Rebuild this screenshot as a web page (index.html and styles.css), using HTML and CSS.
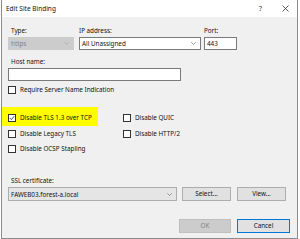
FILE: index.html
```html
<!DOCTYPE html>
<html lang="en">
<head>
    <meta charset="UTF-8">
    <title>Edit Site Binding</title>
    <link rel="stylesheet" href="styles.css">
</head>
<body>
    <div class="dialog">
        <div class="titlebar">
            <span class="title">Edit Site Binding</span>
            <span class="help">?</span>
            <svg class="close" width="7" height="7" viewBox="0 0 7 7">
                <path d="M0.5 0.5 L6.5 6.5 M6.5 0.5 L0.5 6.5" stroke="#333" stroke-width="0.8" fill="none"/>
            </svg>
        </div>

        <div class="content">
            <div class="fields">
                <div class="field f-type">
                    <label class="lbl indent">Type:</label>
                    <div class="select disabled">
                        <span>https</span>
                        <svg class="chev" width="5" height="3" viewBox="0 0 5 3"><path d="M0.3 0.3 L2.5 2.5 L4.7 0.3" stroke="#a8a8a8" stroke-width="0.7" fill="none"/></svg>
                    </div>
                </div>
                <div class="field f-ip">
                    <label class="lbl">IP address:</label>
                    <div class="select">
                        <span>All Unassigned</span>
                        <svg class="chev" width="5" height="3" viewBox="0 0 5 3"><path d="M0.3 0.3 L2.5 2.5 L4.7 0.3" stroke="#666" stroke-width="0.7" fill="none"/></svg>
                    </div>
                </div>
                <div class="field f-port">
                    <label class="lbl">Port:</label>
                    <div class="input">443</div>
                </div>
            </div>

            <div class="field f-host">
                <label class="lbl indent">Host name:</label>
                <div class="input"></div>
            </div>

            <div class="opt sni"><span class="box"></span>Require Server Name Indication</div>

            <div class="opts">
                <div class="opt highlight">
                    <span class="box checked">
                        <svg width="6" height="6" viewBox="0 0 6 6"><path d="M0.8 3 L2.4 4.6 L5.2 1.2" stroke="#222" stroke-width="0.8" fill="none"/></svg>
                    </span>Disable TLS 1.3 over TCP
                </div>
                <div class="opt"><span class="box"></span>Disable QUIC</div>
                <div class="opt"><span class="box"></span>Disable Legacy TLS</div>
                <div class="opt"><span class="box"></span>Disable HTTP/2</div>
                <div class="opt"><span class="box"></span>Disable OCSP Stapling</div>
            </div>

            <div class="field f-cert">
                <label class="lbl indent">SSL certificate:</label>
                <div class="cert-row">
                    <div class="select cert-select">
                        <span>FAWEB03.forest-a.local</span>
                        <svg class="chev" width="5" height="3" viewBox="0 0 5 3"><path d="M0.3 0.3 L2.5 2.5 L4.7 0.3" stroke="#777" stroke-width="0.7" fill="none"/></svg>
                    </div>
                    <button class="btn">Select...</button>
                    <button class="btn">View...</button>
                </div>
            </div>

            <div class="actions">
                <button class="btn ok" disabled>OK</button>
                <button class="btn cancel">Cancel</button>
            </div>
        </div>
    </div>
</body>
</html>
```

FILE: styles.css
```css
body {
    margin: 0;
    font-family: "Noto Sans", "Open Sans", sans-serif;
    font-size: 6.3px;
    color: #111;
    background-color: #fff;
}
.dialog {
    margin-left: 1px;
    width: 297px;
    height: 239px;
    box-sizing: border-box;
    border: 1px solid #8c8c8c;
    border-top: none;
    background-color: #f0f0f0;
}
.titlebar {
    height: 17px;
    background-color: #fff;
    display: flex;
    align-items: center;
    padding-left: 4px;
}
.title {
    flex: 1;
    font-size: 6.5px;
}
.help {
    font-size: 6.8px;
    color: #333;
    margin-right: 20px;
}
.close {
    margin-right: 8px;
}
.content {
    padding: 0 7px 0 6px;
}
.fields {
    display: flex;
    margin-top: 9px;
}
.field {
    display: flex;
    flex-direction: column;
}
.lbl {
    line-height: 10px;
    height: 10px;
    margin-bottom: 1px;
}
.lbl.indent {
    padding-left: 3px;
}
.f-type {
    width: 66px;
    margin-right: 5px;
}
.f-ip {
    width: 122px;
    margin-right: 3px;
}
.f-port {
    width: 33px;
}
.select,
.input {
    height: 13px;
    box-sizing: border-box;
    border: 1px solid #7a7a7a;
    background-color: #fff;
    display: flex;
    align-items: center;
    padding: 0 4px 0 2px;
    line-height: 11px;
}
.select span {
    flex: 1;
}
.select.disabled {
    background-color: #cccccc;
    border-color: #cccccc;
    color: #838383;
}
.f-host {
    margin-top: 7px;
    width: 173px;
}
.opt {
    display: flex;
    align-items: center;
    height: 8px;
    line-height: 8px;
    white-space: nowrap;
}
.box {
    width: 8px;
    height: 8px;
    box-sizing: border-box;
    border: 1px solid #333;
    background-color: #fff;
    margin-right: 4px;
    display: flex;
    align-items: center;
    justify-content: center;
    flex-shrink: 0;
}
.sni {
    margin-top: 5px;
}
.opts {
    display: grid;
    grid-template-columns: 115px auto;
    row-gap: 7.5px;
    margin-top: 20px;
}
.opt.highlight {
    justify-self: start;
    background-color: #ffff00;
    margin: -7px 0 -4px -6px;
    padding: 7px 6px 4px 6px;
}
.f-cert {
    margin-top: 23px;
}
.cert-row {
    display: flex;
    align-items: center;
}
.cert-select {
    width: 169px;
    height: 14px;
    background-color: #e5e5e5;
    border-color: #adadad;
    margin-right: 5px;
}
.btn {
    font-family: inherit;
    font-size: 6.3px;
    color: #111;
    height: 14px;
    width: 49px;
    box-sizing: border-box;
    border: 1px solid #adadad;
    background-color: #e1e1e1;
    padding: 0;
    line-height: 12px;
}
.cert-row .btn + .btn {
    margin-left: 6px;
}
.actions {
    display: flex;
    justify-content: flex-end;
    margin-top: 18px;
}
.ok {
    width: 52px;
    margin-right: 6px;
    background-color: #cccccc;
    border-color: #bfbfbf;
    color: #838383;
}
.cancel {
    width: 53px;
    border-color: #0078d7;
}
```
